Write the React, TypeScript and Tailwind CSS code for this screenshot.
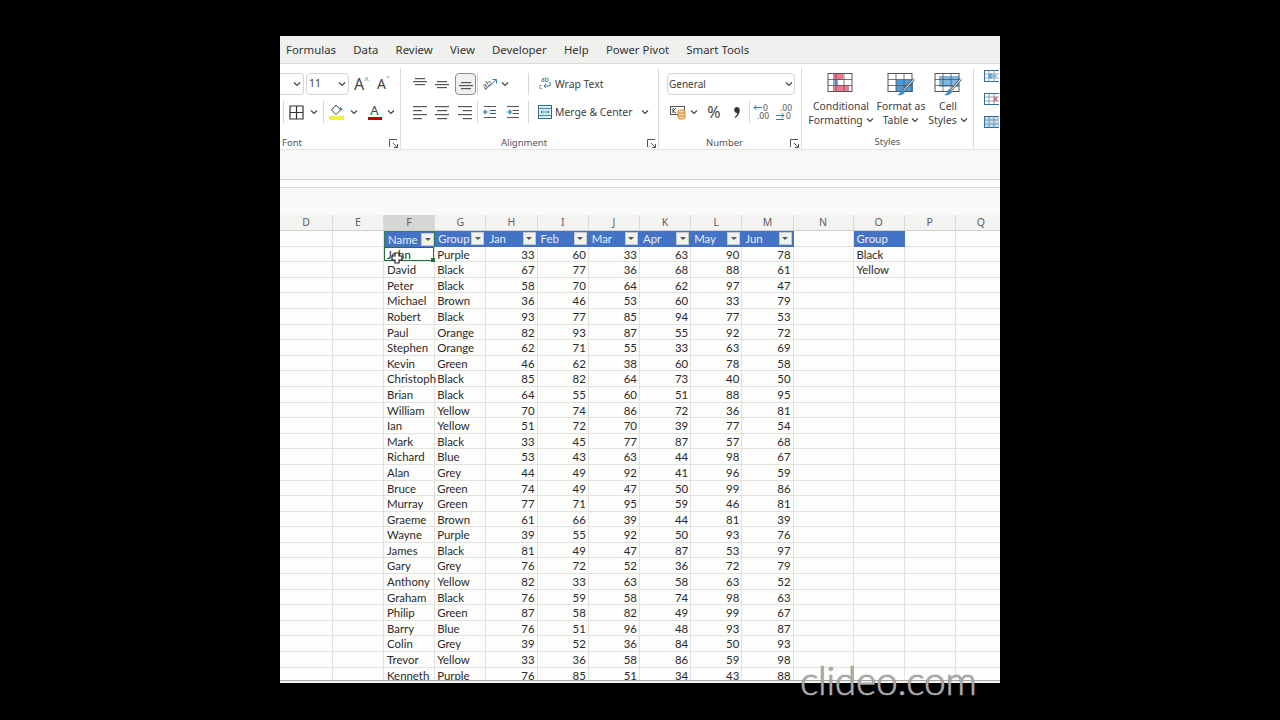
import React from "react";

const rows: [string, string, number, number, number, number, number, number][] = [
  ["John", "Purple", 33, 60, 33, 63, 90, 78],
  ["David", "Black", 67, 77, 36, 68, 88, 61],
  ["Peter", "Black", 58, 70, 64, 62, 97, 47],
  ["Michael", "Brown", 36, 46, 53, 60, 33, 79],
  ["Robert", "Black", 93, 77, 85, 94, 77, 53],
  ["Paul", "Orange", 82, 93, 87, 55, 92, 72],
  ["Stephen", "Orange", 62, 71, 55, 33, 63, 69],
  ["Kevin", "Green", 46, 62, 38, 60, 78, 58],
  ["Christoph", "Black", 85, 82, 64, 73, 40, 50],
  ["Brian", "Black", 64, 55, 60, 51, 88, 95],
  ["William", "Yellow", 70, 74, 86, 72, 36, 81],
  ["Ian", "Yellow", 51, 72, 70, 39, 77, 54],
  ["Mark", "Black", 33, 45, 77, 87, 57, 68],
  ["Richard", "Blue", 53, 43, 63, 44, 98, 67],
  ["Alan", "Grey", 44, 49, 92, 41, 96, 59],
  ["Bruce", "Green", 74, 49, 47, 50, 99, 86],
  ["Murray", "Green", 77, 71, 95, 59, 46, 81],
  ["Graeme", "Brown", 61, 66, 39, 44, 81, 39],
  ["Wayne", "Purple", 39, 55, 92, 50, 93, 76],
  ["James", "Black", 81, 49, 47, 87, 53, 97],
  ["Gary", "Grey", 76, 72, 52, 36, 72, 79],
  ["Anthony", "Yellow", 82, 33, 63, 58, 63, 52],
  ["Graham", "Black", 76, 59, 58, 74, 98, 63],
  ["Philip", "Green", 87, 58, 82, 49, 99, 67],
  ["Barry", "Blue", 76, 51, 96, 48, 93, 87],
  ["Colin", "Grey", 39, 52, 36, 84, 50, 93],
  ["Trevor", "Yellow", 33, 36, 58, 86, 59, 98],
  ["Kenneth", "Purple", 76, 85, 51, 34, 43, 88],
];

const tabs = ["Formulas", "Data", "Review", "View", "Developer", "Help", "Power Pivot", "Smart Tools"];
const columns = ["D", "E", "F", "G", "H", "I", "J", "K", "L", "M", "N", "O", "P", "Q"];
const tableHead = ["Name", "Group", "Jan", "Feb", "Mar", "Apr", "May", "Jun"];
const gridCols = "grid grid-cols-[53px_51px_repeat(8,51.2px)_60px_51.2px_51.2px_51.2px]";

const Chevron = ({ className = "" }: { className?: string }) => (
  <svg width="8" height="6" viewBox="0 0 8 6" className={`shrink-0 ${className}`}>
    <path d="M1 1.500 4 4.500 7 1.500" fill="none" stroke="#444" strokeWidth="1.200" />
  </svg>
);

const Launcher = () => (
  <svg width="9" height="9" viewBox="0 0 9 9" className="shrink-0">
    <path d="M.5 8V.5H8M4 4 8.500 8.500M8.500 5v3.500H5" fill="none" stroke="#555" strokeWidth="1" />
  </svg>
);

const Sep = ({ className = "" }: { className?: string }) => <div className={`w-px h-[22px] shrink-0 bg-[#d6d6d6] ${className}`} />;

// text alignment icon, [x, width] per line
const Lines = ({ lines, y = [3, 7, 11, 15] }: { lines: [number, number][]; y?: number[] }) => (
  <svg width="14" height="18" viewBox="0 0 14 18" className="shrink-0">
    {lines.map(([x, w], i) => (
      <rect key={i} x={x} y={y[i]} width={w} height="1.200" fill="#555" />
    ))}
  </svg>
);

const Indent = ({ flip }: { flip?: boolean }) => (
  <svg width="14" height="14" viewBox="0 0 14 14" className="shrink-0">
    <path d="M1 1.500h12M6.500 5.500H13M6.500 8.500H13M1 12.500h12" stroke="#555" strokeWidth="1.100" fill="none" />
    <path d={flip ? "M0.500 7H5M3.200 5 5.200 7 3.200 9" : "M5.500 7H1M2.800 5 .8 7 2.800 9"} stroke="#2b7cb0" strokeWidth="1.100" fill="none" />
  </svg>
);

// increase / decrease decimal
const Decimal = ({ more, className = "" }: { more?: boolean; className?: string }) => (
  <svg width="18" height="18" viewBox="0 0 18 18" className={`shrink-0 ${className}`}>
    <text x={more ? 5 : 11} y="7.500" fontSize="8.500" fill="#555" fontFamily="Noto Sans">{more ? ".00" : "0"}</text>
    <text x={more ? 11 : 5} y="16" fontSize="8.500" fill="#555" fontFamily="Noto Sans">{more ? "0" : ".00"}</text>
    {more ? (
      <path d="M1 12.500H9M6.500 10 9 12.500 6.500 15M1 16.500H9" fill="none" stroke="#2b7cb0" strokeWidth="1" />
    ) : (
      <path d="M10 4.500H2M4.500 2 2 4.500 4.500 7" fill="none" stroke="#2b7cb0" strokeWidth="1" />
    )}
  </svg>
);

const TableIcon = ({ kind }: { kind: "cond" | "format" | "cell" }) => (
  <svg width="28" height="24" viewBox="0 0 28 24" className="shrink-0">
    {kind === "cond" && (
      <>
        <rect x="6" y="1" width="10" height="6" fill="#f2778f" />
        <rect x="6" y="7" width="5" height="5" fill="#7da9d8" />
        <rect x="6" y="12" width="16" height="6" fill="#f2778f" />
      </>
    )}
    {kind === "format" && <rect x="9" y="7" width="17" height="12" fill="#4d9bd8" />}
    {kind === "cell" && <rect x="5" y="3" width="20" height="11" fill="#7ab8e6" />}
    <rect x="1" y=".5" width="24" height="18" fill="none" stroke="#555" strokeWidth="1" />
    <path d="M1 6.500h24M1 12.500h24M9 .5v18M17 .5v18" stroke="#555" strokeWidth=".8" fill="none" />
    {kind !== "cond" && (
      <>
        <path d="M27 6 17 17" stroke="#555" strokeWidth="2.400" />
        <path d="M27 6 17 17" stroke="#fff" strokeWidth="1" />
        <path d="M10 22c4 1 8-1 8-4 0-2-3-3-4-1-1 2-1 4-4 5z" fill="#3f8fcc" />
      </>
    )}
  </svg>
);

const SideIcon = ({ kind }: { kind: "insert" | "delete" | "format" }) => (
  <svg width="15" height="15" viewBox="0 0 15 15" className="shrink-0">
    <rect x=".5" y="2.500" width="20" height="11" fill={kind === "format" ? "#bcdcf2" : "#fff"} stroke="#2f6f9f" />
    <path d="M.5 6h20M.5 10h20M5 2.500v11M10 2.500v11" stroke="#6a7f8f" strokeWidth=".7" />
    {kind === "insert" && <path d="M13 8H5M8 5.500 5 8l3 2.500" stroke="#2b9bd8" strokeWidth="1.200" fill="none" />}
    {kind === "delete" && <path d="M10 6l3 4M13 6l-3 4" stroke="#d0455a" strokeWidth="1.200" fill="none" />}
  </svg>
);

const StyleButton = ({ kind, top, bottom, width }: { kind: "cond" | "format" | "cell"; top: string; bottom: string; width: string }) => (
  <div className={`flex flex-col items-center ${width}`}>
    <TableIcon kind={kind} />
    <div className="mt-[2px] text-[10.4px] leading-[14px] text-[#3c3c3c] whitespace-nowrap">{top}</div>
    <div className="text-[10.4px] leading-[14px] text-[#3c3c3c] whitespace-nowrap flex items-center gap-[3px]">
      {bottom}
      <Chevron />
    </div>
  </div>
);

const Ribbon = () => (
  <div className="h-[86px] bg-white flex text-[#3c3c3c] overflow-hidden border-b border-[#e4e4e2]">
    {/* Font */}
    <div className="w-[121px] shrink-0 flex flex-col border-r border-[#dcdcdc] mt-[4px]">
      <div className="mt-[5px] h-[22px] flex items-center">
        <div className="w-[24px] h-[22px] border border-l-0 border-[#d4d4d4] rounded-r-[4px] flex items-center justify-end pr-[2px]">
          <Chevron />
        </div>
        <div className="ml-[2px] w-[43px] h-[22px] border border-[#d4d4d4] rounded-[4px] flex items-center justify-between px-[2px] text-[10.4px]">
          <span>11</span>
          <Chevron />
        </div>
        <span className="ml-[5px] text-[16px] leading-none w-[22px] text-[#444] flex items-start">
          A<span className="text-[8px] text-[#2b7cb0]">^</span>
        </span>
        <span className="text-[14px] leading-none ml-[1px] text-[#444] flex items-start">
          A<span className="text-[8px] text-[#2b7cb0]">ˇ</span>
        </span>
      </div>
      <div className="mt-[6px] h-[22px] flex items-center">
        <Sep className="ml-[3px]" />
        <svg width="15" height="15" viewBox="0 0 15 15" className="ml-[5px]">
          <path d="M1 1h13v13H1zM7.500 1v13M1 7.500h13" fill="none" stroke="#333" strokeWidth="1.200" />
        </svg>
        <Chevron className="ml-[6px]" />
        <Sep className="ml-[5px]" />
        <svg width="16" height="16" viewBox="0 0 16 16" className="ml-[5px]">
          <path d="M7 1 2.500 6 7 10.500 11.500 6z" fill="none" stroke="#444" />
          <path d="M11 3.500 13 6" stroke="#2b7cb0" strokeWidth="1.500" />
          <rect x="0" y="12" width="15" height="4" fill="#f1ef3c" />
        </svg>
        <Chevron className="ml-[5px]" />
        <div className="ml-[9px] w-[15px] flex flex-col items-center">
          <span className="text-[13px] leading-[12px] text-[#444]">A</span>
          <div className="w-[14px] h-[3px] bg-[#c00000] mt-[1px]" />
        </div>
        <Chevron className="ml-[5px]" />
      </div>
      <div className="mt-[13px] flex items-center justify-between px-[2px]">
        <span className="text-[9.500px] leading-[14px] text-[#555]">Font</span>
        <Launcher />
      </div>
    </div>
    {/* Alignment */}
    <div className="w-[258px] shrink-0 flex flex-col border-r border-[#dcdcdc] mt-[4px]">
      <div className="mt-[5px] h-[22px] flex items-center">
        <div className="ml-[12px]"><Lines lines={[[2, 10], [0, 14], [2, 10]]} y={[3, 6, 9]} /></div>
        <div className="ml-[8px]"><Lines lines={[[2, 10], [0, 14], [2, 10]]} y={[6, 9, 12]} /></div>
        <div className="ml-[6px] w-[21px] h-[22px] shrink-0 rounded-[4px] border border-[#8f8f8f] bg-[#f0f0ee] flex items-center justify-center">
          <Lines lines={[[2, 10], [0, 14], [2, 10]]} y={[7, 10, 13]} />
        </div>
        <Sep className="ml-[1px]" />
        <svg width="16" height="16" viewBox="0 0 16 16" className="ml-[4px] shrink-0">
          <text x="0" y="11" fontSize="8" fill="#555" transform="rotate(-35 5 8)" fontFamily="Noto Sans">ab</text>
          <path d="M3 14 14 4M10.500 3.500H14.500V7.500" fill="none" stroke="#2b7cb0" strokeWidth="1" />
        </svg>
        <Chevron className="ml-[3px]" />
        <Sep className="ml-[19px]" />
        <div className="ml-[10px] flex items-center gap-[3px] text-[10.4px] whitespace-nowrap">
          <svg width="13" height="15" viewBox="0 0 13 15" className="shrink-0">
            <text x="2" y="6" fontSize="6.500" fill="#555" fontFamily="Noto Sans">ab</text>
            <text x="0" y="13" fontSize="6.500" fill="#555" fontFamily="Noto Sans">c</text>
            <path d="M11 6v4H5M7 8 5 10l2 2" fill="none" stroke="#2b7cb0" />
          </svg>
          <span className="mt-[1px]">Wrap Text</span>
        </div>
      </div>
      <div className="mt-[6px] h-[22px] flex items-center">
        <div className="ml-[12px]"><Lines lines={[[0, 14], [0, 9], [0, 14], [0, 9]]} /></div>
        <div className="ml-[8px]"><Lines lines={[[0, 14], [2, 10], [0, 14], [2, 10]]} /></div>
        <div className="ml-[9px]"><Lines lines={[[0, 14], [5, 9], [0, 14], [5, 9]]} /></div>
        <Sep className="ml-[5px]" />
        <div className="ml-[5px]"><Indent /></div>
        <div className="ml-[9px]"><Indent flip /></div>
        <Sep className="ml-[8px]" />
        <div className="ml-[9px] flex items-center gap-[3px] text-[10.4px] whitespace-nowrap">
          <svg width="14" height="14" viewBox="0 0 14 14" className="shrink-0">
            <rect x=".5" y=".5" width="13" height="13" fill="#d9edf7" stroke="#2f6f8f" />
            <path d="M.5 3.500h13M.5 10.500h13M3 7h8M4.500 5.500 3 7l1.500 1.500M9.500 5.500 11 7 9.500 8.500" stroke="#2f6f8f" strokeWidth=".8" fill="none" />
          </svg>
          <span className="mt-[1px]">Merge &amp; Center</span>
        </div>
        <Chevron className="ml-[9px]" />
      </div>
      <div className="mt-[13px] flex items-center pr-[2px]">
        <span className="flex-1 text-center text-[9.500px] leading-[14px] text-[#555]">Alignment</span>
        <Launcher />
      </div>
    </div>
    {/* Number */}
    <div className="w-[143px] shrink-0 flex flex-col border-r border-[#dcdcdc] mt-[4px]">
      <div className="mt-[5px] ml-[8px] w-[128px] h-[22px] shrink-0 border border-[#d4d4d4] rounded-[4px] flex items-center justify-between pl-[1px] pr-[1px] text-[10px]">
        <span>General</span>
        <Chevron />
      </div>
      <div className="mt-[6px] h-[22px] flex items-center">
        <svg width="16" height="16" viewBox="0 0 16 16" className="ml-[11px] shrink-0">
          <rect x=".5" y="2.500" width="14" height="8" fill="#fff" stroke="#555" />
          <rect x="8" y="6" width="7" height="9" rx="1.500" fill="#f4d6a6" stroke="#d88a2a" />
          <path d="M8 9h7M8 12h7" stroke="#d88a2a" />
          <path d="M3 4v5M3 7l3-3M3 7l3 2" stroke="#444" fill="none" />
        </svg>
        <Chevron className="ml-[4px]" />
        <span className="ml-[6px] w-[20px] text-center text-[16px] leading-none text-[#444]">%</span>
        <svg width="6" height="11" viewBox="0 0 6 11" className="ml-[10px] shrink-0">
          <path d="M2.800 0C4.600 0 5.800 1.300 5.800 3.200 5.800 6.500 3.500 9.500 1 11L.5 10.300C2 9 3 7.600 3.300 6 1.500 6 .2 4.800.2 3 .2 1.200 1.300 0 2.800 0Z" fill="#333" />
        </svg>
        <Sep className="ml-[9px]" />
        <Decimal className="ml-[2px]" />
        <Decimal more className="ml-[5px]" />
      </div>
      <div className="mt-[13px] flex items-center pr-[2px]">
        <span className="flex-1 text-center text-[9.500px] leading-[14px] text-[#555]">Number</span>
        <Launcher />
      </div>
    </div>
    {/* Styles */}
    <div className="w-[172px] shrink-0 flex flex-col border-r border-[#dcdcdc] mt-[4px]">
      <div className="mt-[5px] h-[64px] flex items-start pl-[8px]">
        <StyleButton kind="cond" top="Conditional" bottom="Formatting" width="w-[62px]" />
        <StyleButton kind="format" top="Format as" bottom="Table" width="w-[58px]" />
        <StyleButton kind="cell" top="Cell" bottom="Styles" width="w-[36px]" />
      </div>
      <div className="text-center text-[9.500px] leading-[14px] text-[#555]">Styles</div>
    </div>
    {/* Cells, cut off by the right edge */}
    <div className="flex-1 min-w-0 flex flex-col gap-[8px] pl-[10px] pt-[4px] overflow-hidden">
      <SideIcon kind="insert" />
      <SideIcon kind="delete" />
      <SideIcon kind="format" />
    </div>
  </div>
);

const FilterButton = () => (
  <span className="w-[13px] h-[13px] bg-[#f2f2f2] border border-[#c8c8c8] flex items-center justify-center shrink-0">
    <span className="w-0 h-0 border-x-[3px] border-x-transparent border-t-[3px] border-t-[#555]" />
  </span>
);

const Sheet = () => {
  const cell = "h-[15.6px] border-r border-b border-[#e2e2df] leading-[15px] whitespace-nowrap";
  return (
    <div className="h-[465px] shrink-0 overflow-hidden bg-[#fdfdfb] font-['Lato','Liberation_Sans',sans-serif] text-[11.4px] text-[#2a2a2a]">
      <div className={`${gridCols} h-[16px] bg-[#f3f3f1] border-b border-[#cfcfcc] text-[#5f5f5f] text-[10.5px] font-['Noto_Sans',sans-serif]`}>
        {columns.map((c) => (
          <div key={c} className={`text-center leading-[15px] border-r border-[#dadad7] ${c === "F" ? "bg-[#d6d6d4]" : ""}`}>
            {c}
          </div>
        ))}
      </div>
      <div className={gridCols}>
        <div className={cell} />
        <div className={cell} />
        {tableHead.map((h) => (
          <div
            key={h}
            className={`h-[15.6px] bg-[#4472c4] text-[#e8eefa] flex items-center justify-between pl-[3px] leading-[15px] ${
              h === "Name" ? "border border-b-0 border-[#2e7d5b] pr-0" : "pr-[2px]"
            }`}
          >
            {h}
            <FilterButton />
          </div>
        ))}
        <div className={cell} />
        <div className="h-[15.6px] bg-[#4472c4] text-[#e8eefa] pl-[3px] leading-[15px]">Group</div>
        <div className={cell} />
        <div className={cell} />
        {rows.map((r, i) => (
          <React.Fragment key={r[0]}>
            <div className={cell} />
            <div className={cell} />
            <div className={`${cell} pl-[3px] relative`}>
              {r[0]}
              {i === 0 && (
                <>
                  <span className="absolute inset-0 border-[1.5px] border-[#217346]" />
                  <span className="absolute right-[-1px] bottom-[-1px] w-[4px] h-[4px] bg-[#217346]" />
                  <svg width="12" height="12" viewBox="0 0 12 12" className="absolute left-[7px] top-[5px]">
                    <path d="M4 1h4v3h3v4H8v3H4V8H1V4h3z" fill="#fff" stroke="#222" strokeWidth="1.200" />
                  </svg>
                </>
              )}
            </div>
            <div className={`${cell} pl-[2px]`}>{r[1]}</div>
            {r.slice(2).map((n, j) => (
              <div key={j} className={`${cell} text-right pr-[2px]`}>{n}</div>
            ))}
            <div className={cell} />
            <div className={`${cell} pl-[3px]`}>{i === 0 ? "Black" : i === 1 ? "Yellow" : ""}</div>
            <div className={cell} />
            <div className={cell} />
          </React.Fragment>
        ))}
      </div>
    </div>
  );
};

export default function App() {
  return (
    <div className="relative h-[720px] bg-black flex justify-center overflow-hidden font-['Noto_Sans','Open_Sans',sans-serif]">
      <div className="w-[720px] h-[647px] mt-[36px] flex flex-col overflow-hidden bg-white">
        <div className="h-[28px] shrink-0 bg-[#f0f0ee] flex items-center gap-[17.2px] pl-[6px] border-b border-[#dcdcda] text-[11.4px] text-[#333]">
          {tabs.map((t) => (
            <span key={t}>{t}</span>
          ))}
        </div>
        <Ribbon />
        <div className="h-[30px] shrink-0 bg-[#f8f8f6] border-b border-[#d4d4d2]" />
        <div className="h-[8px] shrink-0 bg-white border-b border-[#d8d8d6]" />
        <div className="h-[27px] shrink-0 bg-[#f9f9f7]" />
        <Sheet />
        <div className="h-[3px] shrink-0 bg-[#f3f3f1] border-t border-[#a8a8a6]" />
      </div>
      <div className="absolute left-[800px] top-[657px] text-[39px] leading-[46px] font-['Lato',sans-serif] font-light tracking-[-0.3px] text-[#b0b0b0] [-webkit-text-stroke:0.5px_#a4a4a4] [text-shadow:0_0_1px_#555]">
        clideo.com
      </div>
    </div>
  );
}
